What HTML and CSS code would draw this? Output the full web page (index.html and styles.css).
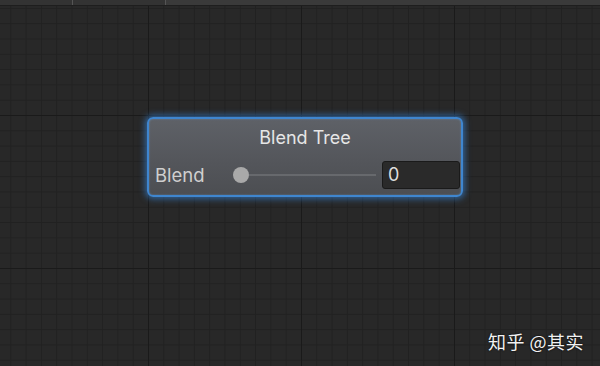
FILE: index.html
```html
<!DOCTYPE html>
<html>
<head>
<meta charset="utf-8">
<link rel="stylesheet" href="styles.css">
</head>
<body>
<div class="canvas">
  <div class="topbar"><div class="tab"></div><div class="tab tab2"></div></div>
  <div class="node">
    <div class="node-title">Blend Tree</div>
    <div class="node-row">
      <span class="label">Blend</span>
      <div class="slider"><span class="knob"></span><span class="track"></span></div>
      <div class="field">0</div>
    </div>
  </div>
  <div class="watermark">知乎 @其实</div>
</div>
</body>
</html>
```
FILE: styles.css
```css
html, body {
  margin: 0;
  padding: 0;
  width: 600px;
  height: 366px;
  overflow: hidden;
  background: #282828;
}
.canvas {
  position: relative;
  width: 600px;
  height: 366px;
  font-family: Inter, "Noto Sans", sans-serif;
  background-color: #282828;
  background-image:
    linear-gradient(to right, #1a1a1a 0, #1a1a1a 1px, transparent 1px),
    linear-gradient(to bottom, #1a1a1a 0, #1a1a1a 1px, transparent 1px),
    linear-gradient(to right, #212121 0, #212121 1px, transparent 1px),
    linear-gradient(to bottom, #212121 0, #212121 1px, transparent 1px);
  background-size: 153px 153px, 153px 153px, 15.3px 15.3px, 15.3px 15.3px;
  background-position: 148px 115px, 148px 115px, 148px 115px, 148px 115px;
}
.topbar {
  position: absolute;
  left: 0; top: 0;
  width: 600px;
  height: 5px;
  background: #3a3a3a;
  border-bottom: 1px solid #1e1e1e;
  display: flex;
}
.tab {
  width: 72px;
  height: 5px;
  background: #333;
  border-right: 1px solid #555;
}
.tab2 { width: 92px; }
.node {
  position: absolute;
  left: 147px;
  top: 117px;
  width: 312px;
  height: 76px;
  border: 2px solid #3f86cf;
  border-radius: 6px;
  background: linear-gradient(to bottom, #5e6167 0%, #54565b 55%, #4c4e52 100%);
  box-shadow: 0 0 6px 2px rgba(52, 124, 200, 0.7), inset 0 0 2px rgba(120, 180, 240, 0.5);
  display: flex;
  flex-direction: column;
}
.node-title {
  color: #e6e6e6;
  font-size: 18px;
  text-align: center;
  padding-top: 8px;
  height: 24px;
  line-height: 22px;
}
.node-row {
  display: flex;
  align-items: center;
  padding: 10px 0 0 6px;
}
.label {
  color: #cfcfcf;
  font-size: 18.5px;
  width: 78px;
}
.slider {
  display: flex;
  align-items: center;
  width: 143px;
}
.knob {
  width: 16px;
  height: 16px;
  border-radius: 50%;
  background: #a9a9a9;
  flex: none;
}
.track {
  flex: 1;
  height: 2px;
  background: #67696d;
}
.field {
  margin-left: 6px;
  width: 71px;
  height: 26px;
  background: #2a2a2a;
  border: 1px solid #1a1a1a;
  border-radius: 3px;
  color: #dedede;
  font-size: 18px;
  line-height: 26px;
  padding-left: 5px;
}
.watermark {
  position: absolute;
  left: 488px;
  top: 328px;
  color: #f2f2f2;
  font-size: 18px;
  font-family: "Noto Sans CJK SC", sans-serif;
  text-shadow: 0 0 2px #000;
  letter-spacing: 0.5px;
}
```
